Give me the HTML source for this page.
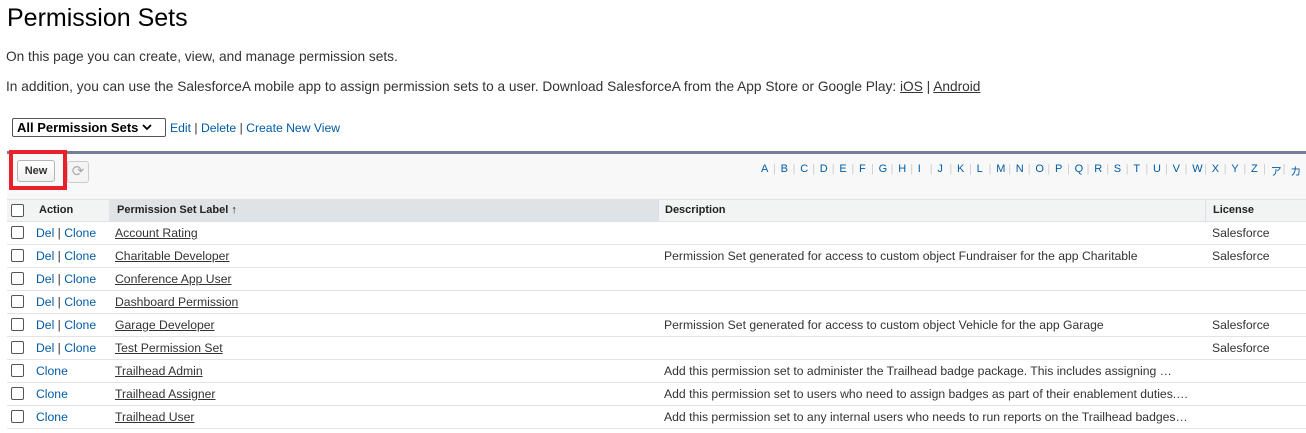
<!DOCTYPE html>
<html><head><style>
body{margin:0;width:1306px;height:433px;overflow:hidden;background:#fff;font-family:"Liberation Sans",Arial,"Noto Sans CJK JP",sans-serif;color:#333;position:relative}
.a{position:absolute;white-space:nowrap}
a{color:#015ba7;text-decoration:none}
.u{color:#333;text-decoration:underline}
.cb{position:absolute;width:11px;height:11px;border:1px solid #555;border-radius:2px;background:#fff}
.row{position:absolute;left:7px;width:1299px;height:23px;border-bottom:1px solid #e3e3e3;font-size:12.2px}
.row span{position:absolute;top:5px}
</style></head><body>
<div class="a" style="left:7px;top:4px;font-size:25px;color:#000">Permission Sets</div>
<div class="a" style="left:6px;top:49px;font-size:13.7px">On this page you can create, view, and manage permission sets.</div>
<div class="a" style="left:6px;top:79px;font-size:13.7px">In addition, you can use the SalesforceA mobile app to assign permission sets to a user. Download SalesforceA from the App Store or Google Play: <span style="text-decoration:underline">iOS</span> | <span style="text-decoration:underline">Android</span></div>
<div class="a" style="left:12px;top:118px;width:148px;height:17px;border:1px solid #555;border-radius:2px;font-size:13px;font-weight:bold;color:#000;line-height:17px;padding-left:4px">All Permission Sets <svg width="10" height="8" viewBox="0 0 10 8" style="vertical-align:1px"><path d="M1 2 L5 6 L9 2" stroke="#000" stroke-width="1.8" fill="none"/></svg></div>
<div class="a" style="left:170px;top:121px;font-size:12.2px;color:#333"><a>Edit</a> | <a>Delete</a> | <a>Create New View</a></div>
<div class="a" style="left:7px;top:151px;width:1299px;height:48px;background:#f8f8f8;border-top:3px solid #747e96"></div>
<div class="a" style="left:17px;top:160px;width:36px;height:20px;border:1px solid #b5b5b5;border-radius:3px;background:linear-gradient(#fff,#f0f0f0);font-size:11px;font-weight:bold;text-align:center;line-height:20px;color:#333">New</div>
<div class="a" style="left:9px;top:150px;width:58px;height:40px;border:4px solid #e8202a;box-sizing:border-box"></div>
<div class="a" style="left:67px;top:161px;width:20px;height:20px;border:1px solid #ccc;border-radius:3px;background:#f4f4f4;font-size:15px;color:#aaa;text-align:center;line-height:20px">&#10227;</div>
<div class="a" id="al" style="left:761px;top:163px;font-size:11px;color:#ccc"></div>
<div class="a" style="left:7px;top:199px;width:1299px;height:21px;background:#f2f3f3;border-top:1px solid #e0e3e5;border-bottom:1px solid #e0e3e5;font-size:11px;font-weight:bold;color:#222">
<div class="cb" style="left:4px;top:4px"></div>
<span class="a" style="left:32px;top:4px">Action</span>
<div class="a" style="left:102px;top:0;width:549px;height:21px;background:#e0e3e5"></div>
<span class="a" style="left:110px;top:4px">Permission Set Label &#8593;</span>
<div class="a" style="left:651px;top:0;width:1px;height:21px;background:#dde"></div>
<span class="a" style="left:658px;top:4px">Description</span>
<div class="a" style="left:1198px;top:0;width:1px;height:21px;background:#dde"></div>
<span class="a" style="left:1206px;top:4px">License</span>
</div>
<div id="rows"></div>
<script>
var L="ABCDEFGHIJKLMNOPQRSTUVWXYZ".split("").concat(["ア","カ"]);var h="";
L.forEach(function(c,i){h+='<span style="position:absolute;left:'+(i*19.6)+'px"><a>'+c+'</a></span>'+(i<27?'<span style="position:absolute;left:'+(i*19.6+12)+'px">|</span>':'');});
document.getElementById("al").innerHTML=h;
var R=[["Del | Clone","Account Rating","","Salesforce"],["Del | Clone","Charitable Developer","Permission Set generated for access to custom object Fundraiser for the app Charitable","Salesforce"],["Del | Clone","Conference App User","",""],["Del | Clone","Dashboard Permission","",""],["Del | Clone","Garage Developer","Permission Set generated for access to custom object Vehicle for the app Garage","Salesforce"],["Del | Clone","Test Permission Set","","Salesforce"],["Clone","Trailhead Admin","Add this permission set to administer the Trailhead badge package. This includes assigning …",""],["Clone","Trailhead Assigner","Add this permission set to users who need to assign badges as part of their enablement duties.…",""],["Clone","Trailhead User","Add this permission set to any internal users who needs to run reports on the Trailhead badges…",""]];
var o="";R.forEach(function(r,i){var act=r[0]=="Clone"?'<a>Clone</a>':'<a>Del</a> | <a>Clone</a>';
o+='<div class="row" style="top:'+(221+i*23)+'px"><div class="cb" style="left:4px;top:5px"></div><span style="left:29px">'+act+'</span><span style="left:108px" class="u">'+r[1]+'</span><span style="left:657px">'+r[2]+'</span><span style="left:1205px">'+r[3]+'</span></div>';});
document.getElementById("rows").innerHTML=o;
</script>
</body></html>
